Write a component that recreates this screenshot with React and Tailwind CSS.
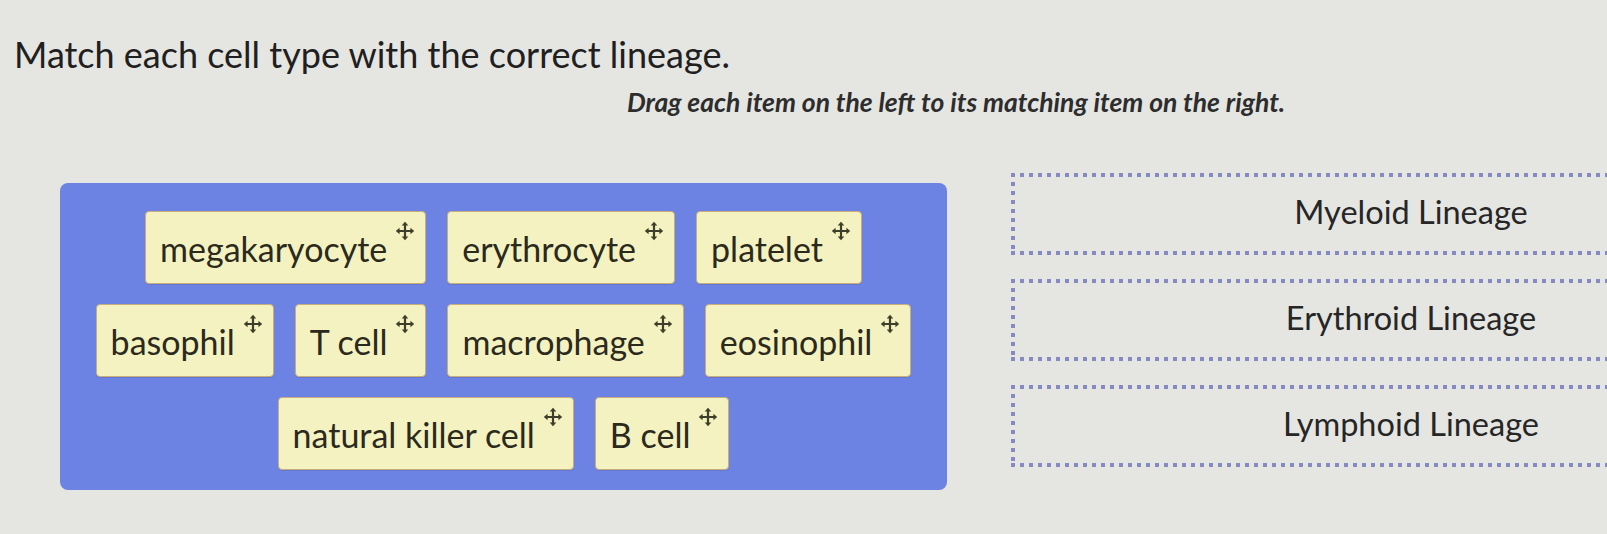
import React from 'react'

const CELLS = [
  ['megakaryocyte', 'erythrocyte', 'platelet'],
  ['basophil', 'T cell', 'macrophage', 'eosinophil'],
  ['natural killer cell', 'B cell'],
]

const LINEAGES = ['Myeloid Lineage', 'Erythroid Lineage', 'Lymphoid Lineage']

// four-way drag handle
function MoveHandle() {
  return (
    <svg width="20" height="20" viewBox="0 0 20 20" className="shrink-0 text-[#3f3e2a]">
      <path d="M10 4v12M4 10h12" stroke="currentColor" strokeWidth="2.2" />
      <path d="M10 0.8l-3.3 3.8h6.6zM10 19.2l-3.3-3.8h6.6zM0.8 10l3.8-3.3v6.6zM19.2 10l-3.8-3.3v6.6z" fill="currentColor" />
    </svg>
  )
}

function Tile({ label }) {
  return (
    <div className="flex h-[73px] items-start gap-[8px] rounded-[4px] border-[1.5px] border-[#c6ad79] bg-[#f3f2c0] pl-[14px] pr-[10px] shadow-[0_1px_0_rgba(0,0,0,0.08)]">
      <span className="pt-[15px] text-[34px] leading-[44px] text-[#2b2a1c]">{label}</span>
      <span className="pt-[9px]">
        <MoveHandle />
      </span>
    </div>
  )
}

export default function App() {
  return (
    <div className="h-[534px] w-[1607px] overflow-hidden bg-[#e5e5e2] font-['Lato','Noto_Sans',sans-serif] text-[#1f1f1f]">
      <h1 className="pl-[14px] pt-[34px] text-[36px] leading-[40px] text-[#202020]">
        Match each cell type with the correct lineage.
      </h1>
      <p className="ml-[627px] mt-[12px] text-[26.5px] font-bold italic leading-[32px] text-[#2d2d2d]">
        Drag each item on the left to its matching item on the right.
      </p>

      <div className="mt-[55px] flex items-start">
        {/* draggable items */}
        <div className="ml-[60px] mt-[10px] flex w-[887px] shrink-0 flex-col items-center gap-[20px] rounded-[8px] bg-[#6d83e4] pb-[20px] pt-[28px]">
          {CELLS.map((row, i) => (
            <div key={i} className="flex gap-[21px]">
              {row.map((c) => (
                <Tile key={c} label={c} />
              ))}
            </div>
          ))}
        </div>

        {/* drop targets, square-dotted outline */}
        <div className="ml-[64px] flex w-[800px] shrink-0 flex-col gap-[24px]">
          {LINEAGES.map((l) => (
            <div
              key={l}
              className="flex h-[82px] items-center justify-center bg-no-repeat pb-[4px] text-[32.5px] text-[#262626] [background-image:repeating-linear-gradient(90deg,#858ac2_0_4px,transparent_4px_9px),repeating-linear-gradient(90deg,#858ac2_0_4px,transparent_4px_9px),repeating-linear-gradient(180deg,#858ac2_0_4px,transparent_4px_9px)] [background-size:100%_4px,100%_4px,4px_100%] [background-position:top_left,bottom_left,top_left]"
            >
              {l}
            </div>
          ))}
        </div>
      </div>
    </div>
  )
}
